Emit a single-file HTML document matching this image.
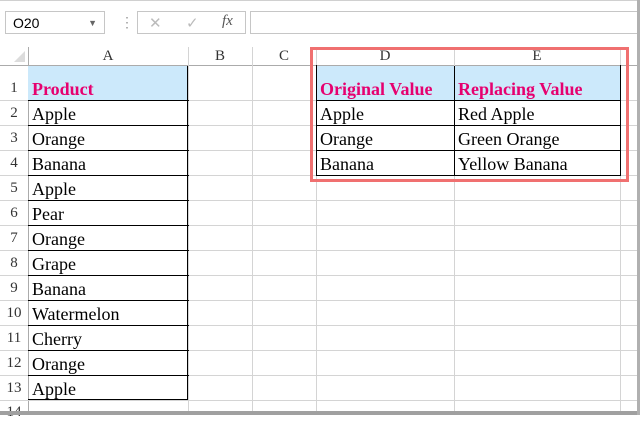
<!DOCTYPE html><html><head><style>
body{margin:0;width:640px;height:415px;background:#fff;overflow:hidden;position:relative;font-family:"Liberation Serif",serif}
.a{position:absolute}
.h{position:absolute;background:#d4d4d4}
.t{position:absolute;font-size:18px;color:#000;line-height:25px;white-space:nowrap}
.rn{position:absolute;left:0;width:28px;text-align:center;font-size:15px;color:#333;font-family:"Liberation Serif",serif}
.p{color:#e6006f;font-weight:bold}
</style></head><body>
<div class="a" style="left:0;top:0;width:640px;height:47px;background:#fff;border-top:1px solid #d0d0d0"></div>
<div class="a" style="left:5px;top:11px;width:100px;height:23px;border:1px solid #c6c6c6;font:14px 'Liberation Sans',sans-serif;line-height:23px;padding-left:7px;box-sizing:border-box">O20<span style="position:absolute;right:7px;top:0;font-size:9px;color:#666">▼</span></div>
<div class="a" style="left:120px;top:14px;color:#999;font:14px 'Liberation Sans',sans-serif">⋮</div>
<div class="a" style="left:137px;top:11px;width:109px;height:23px;border:1px solid #c6c6c6;box-sizing:border-box;font:15px 'Liberation Sans',sans-serif;color:#bbb"><span class="a" style="left:11px;top:2px">✕</span><span class="a" style="left:48px;top:2px">✓</span><span class="a" style="left:84px;top:1px;color:#555;font-family:'Liberation Serif';font-style:italic">fx</span></div>
<div class="a" style="left:250px;top:11px;width:392px;height:23px;border:1px solid #c6c6c6;box-sizing:border-box"></div>
<div class="a" style="left:0;top:47px;width:640px;height:18px;background:#fff;border-bottom:1px solid #ababab"></div>
<div class="a" style="left:14px;top:51px;width:0;height:0;border-left:11px solid transparent;border-bottom:11px solid #dcdcdc"></div>
<div class="a" style="left:0;top:47px;width:640px;font-size:15px;color:#333;line-height:18px">
<span class="a" style="left:28px;width:160px;text-align:center">A</span>
<span class="a" style="left:188px;width:64px;text-align:center">B</span>
<span class="a" style="left:252px;width:64px;text-align:center">C</span>
<span class="a" style="left:316px;width:138px;text-align:center">D</span>
<span class="a" style="left:454px;width:166px;text-align:center">E</span></div>
<div class="h" style="left:28px;top:47px;width:1px;height:368px;background:#ababab"></div>
<div class="h" style="left:188px;top:47px;width:1px;height:368px"></div>
<div class="h" style="left:252px;top:47px;width:1px;height:368px"></div>
<div class="h" style="left:316px;top:47px;width:1px;height:368px"></div>
<div class="h" style="left:454px;top:47px;width:1px;height:368px"></div>
<div class="h" style="left:620px;top:47px;width:1px;height:368px"></div>
<div class="h" style="left:0;top:100px;width:640px;height:1px"></div>
<div class="h" style="left:0;top:125px;width:640px;height:1px"></div>
<div class="h" style="left:0;top:150px;width:640px;height:1px"></div>
<div class="h" style="left:0;top:175px;width:640px;height:1px"></div>
<div class="h" style="left:0;top:200px;width:640px;height:1px"></div>
<div class="h" style="left:0;top:225px;width:640px;height:1px"></div>
<div class="h" style="left:0;top:250px;width:640px;height:1px"></div>
<div class="h" style="left:0;top:275px;width:640px;height:1px"></div>
<div class="h" style="left:0;top:300px;width:640px;height:1px"></div>
<div class="h" style="left:0;top:325px;width:640px;height:1px"></div>
<div class="h" style="left:0;top:350px;width:640px;height:1px"></div>
<div class="h" style="left:0;top:375px;width:640px;height:1px"></div>
<div class="h" style="left:0;top:400px;width:640px;height:1px"></div>
<div class="a" style="left:28px;top:66px;width:160px;height:34px;background:#cce9fb"></div>
<div class="a" style="left:28px;top:66px;width:160px;height:334px;border:1px solid #000;border-top:none;box-sizing:border-box;border-left:none"></div>
<div class="a" style="left:28px;top:100px;width:161px;height:0;border-top:1px solid #000"></div>
<div class="a" style="left:28px;top:125px;width:161px;border-top:1px solid #000"></div>
<div class="a" style="left:28px;top:150px;width:161px;border-top:1px solid #000"></div>
<div class="a" style="left:28px;top:175px;width:161px;border-top:1px solid #000"></div>
<div class="a" style="left:28px;top:200px;width:161px;border-top:1px solid #000"></div>
<div class="a" style="left:28px;top:225px;width:161px;border-top:1px solid #000"></div>
<div class="a" style="left:28px;top:250px;width:161px;border-top:1px solid #000"></div>
<div class="a" style="left:28px;top:275px;width:161px;border-top:1px solid #000"></div>
<div class="a" style="left:28px;top:300px;width:161px;border-top:1px solid #000"></div>
<div class="a" style="left:28px;top:325px;width:161px;border-top:1px solid #000"></div>
<div class="a" style="left:28px;top:350px;width:161px;border-top:1px solid #000"></div>
<div class="a" style="left:28px;top:375px;width:161px;border-top:1px solid #000"></div>
<div class="t p" style="left:32px;top:77px">Product</div>
<div class="t" style="left:32px;top:102px">Apple</div>
<div class="t" style="left:32px;top:127px">Orange</div>
<div class="t" style="left:32px;top:152px">Banana</div>
<div class="t" style="left:32px;top:177px">Apple</div>
<div class="t" style="left:32px;top:202px">Pear</div>
<div class="t" style="left:32px;top:227px">Orange</div>
<div class="t" style="left:32px;top:252px">Grape</div>
<div class="t" style="left:32px;top:277px">Banana</div>
<div class="t" style="left:32px;top:302px">Watermelon</div>
<div class="t" style="left:32px;top:327px">Cherry</div>
<div class="t" style="left:32px;top:352px">Orange</div>
<div class="t" style="left:32px;top:377px">Apple</div>
<div class="rn" style="top:80px">1</div><div class="rn" style="top:105px">2</div><div class="rn" style="top:130px">3</div><div class="rn" style="top:155px">4</div><div class="rn" style="top:180px">5</div><div class="rn" style="top:205px">6</div><div class="rn" style="top:230px">7</div><div class="rn" style="top:255px">8</div><div class="rn" style="top:280px">9</div><div class="rn" style="top:305px">10</div><div class="rn" style="top:330px">11</div><div class="rn" style="top:355px">12</div><div class="rn" style="top:380px">13</div><div class="rn" style="top:404px">14</div>
<div class="a" style="left:316px;top:66px;width:304px;height:34px;background:#cce9fb"></div>
<div class="a" style="left:316px;top:65px;width:305px;height:111px;border:1px solid #000;box-sizing:border-box;border-top:none"></div>
<div class="a" style="left:454px;top:66px;width:1px;height:110px;background:#000"></div>
<div class="a" style="left:316px;top:100px;width:305px;border-top:1px solid #000"></div>
<div class="a" style="left:316px;top:125px;width:305px;border-top:1px solid #000"></div>
<div class="a" style="left:316px;top:150px;width:305px;border-top:1px solid #000"></div>
<div class="t p" style="left:320px;top:77px">Original Value</div>
<div class="t p" style="left:458px;top:77px">Replacing Value</div>
<div class="t" style="left:320px;top:102px">Apple</div><div class="t" style="left:458px;top:102px">Red Apple</div>
<div class="t" style="left:320px;top:127px">Orange</div><div class="t" style="left:458px;top:127px">Green Orange</div>
<div class="t" style="left:320px;top:152px">Banana</div><div class="t" style="left:458px;top:152px">Yellow Banana</div>
<div class="a" style="left:310px;top:47px;width:319px;height:135px;border:3px solid #f07070;box-sizing:border-box"></div>
<div class="a" style="left:0;top:411px;width:640px;height:4px;background:#a0a0a0"></div>
<div class="a" style="left:637px;top:0;width:3px;height:415px;background:#b0b0b0"></div>
</body></html>
